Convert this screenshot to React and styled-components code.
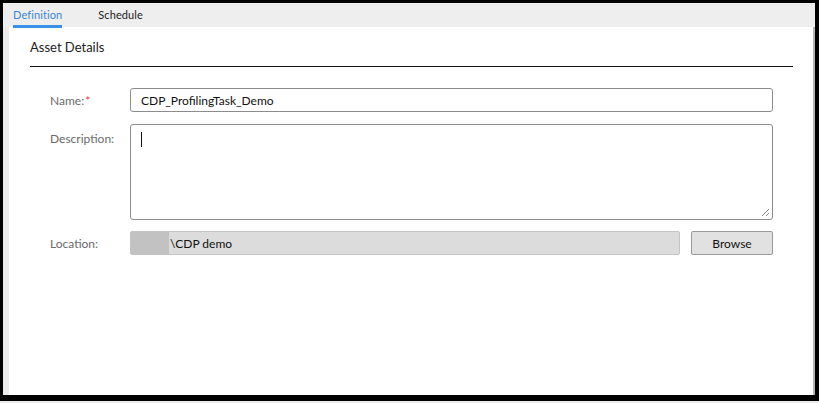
import React from "react";
import styled, { createGlobalStyle } from "styled-components";

const GlobalStyle = createGlobalStyle`
  html, body {
    margin: 0;
    padding: 0;
    background: #ececec;
  }
  body {
    font-family: "Lato", "Liberation Sans", sans-serif;
    color: #222;
  }
`;

const Frame = styled.div`
  box-sizing: border-box;
  width: 819px;
  height: 401px;
  border-style: solid;
  border-color: #000;
  border-width: 3px 4px 6px 3px;
  background: #fff;
  display: flex;
  flex-direction: column;
`;

const TabBar = styled.div`
  height: 24px;
  background: #eeeeee;
  display: flex;
  align-items: stretch;
  padding-left: 10px;
  gap: 36px;
  flex-shrink: 0;
`;

const Tab = styled.div`
  box-sizing: border-box;
  display: flex;
  align-items: center;
  padding-top: 1px;
  font-size: 11px;
  letter-spacing: 0.1px;
  color: ${p => (p.active ? "#3a87d8" : "#222")};
  border-bottom: 3px solid ${p => (p.active ? "#3a8fe6" : "transparent")};
  height: 25px;
`;

const Body = styled.div`
  flex: 1;
  display: flex;
`;

const SideStrip = styled.div`
  width: 6px;
  background: #ebebeb;
`;

const Panel = styled.div`
  flex: 1;
  padding: 12px 20px 0 21px;
  border-right: 2px solid #b5b5b5;
`;

const Heading = styled.div`
  font-size: 13px;
  height: 16px;
  line-height: 16px;
  padding-bottom: 11px;
  border-bottom: 1.5px solid #111;
`;

const Form = styled.div`
  padding: 21px 20px 0 20px;
  display: grid;
  grid-template-columns: 80px 1fr;
  row-gap: 12px;
`;

const Label = styled.div`
  font-size: 12px;
  color: #6a6a6a;
  padding-top: ${p => p.top || 5}px;
`;

const Req = styled.span`
  color: #e0393e;
  margin-left: 1px;
`;

const TextInput = styled.div`
  box-sizing: border-box;
  height: 24px;
  border: 1px solid #8c8c8c;
  border-radius: 3px;
  padding: 0 10px;
  display: flex;
  align-items: center;
  font-size: 12px;
  color: #111;
`;

const TextArea = styled.div`
  position: relative;
  box-sizing: border-box;
  height: 96px;
  border: 1px solid #8c8c8c;
  border-radius: 3px;
  padding: 7px 10px;
`;

const Caret = styled.div`
  width: 1px;
  height: 15px;
  background: #111;
`;

const Grip = styled.svg`
  position: absolute;
  right: 2px;
  bottom: 2px;
`;

const LocationRow = styled.div`
  display: flex;
  gap: 11px;
  margin-top: -1px;
`;

const LocationField = styled.div`
  box-sizing: border-box;
  flex: 1;
  height: 24px;
  background: #dcdcdc;
  border: 1px solid #c4c4c4;
  border-radius: 2px;
  display: flex;
  align-items: center;
  font-size: 12px;
  color: #111;
  overflow: hidden;
`;

const Redacted = styled.span`
  width: 38px;
  height: 100%;
  background: #c2c2c2;
  margin-right: 1px;
`;

const Button = styled.button`
  box-sizing: border-box;
  width: 82px;
  height: 24px;
  background: #e1e1e1;
  border: 1px solid #9a9a9a;
  border-radius: 2px;
  font-family: inherit;
  font-size: 12px;
  color: #111;
  padding: 0;
`;

const App = () => (
  <>
    <GlobalStyle />
    <Frame>
      <TabBar>
        <Tab active>Definition</Tab>
        <Tab>Schedule</Tab>
      </TabBar>
      <Body>
        <SideStrip />
        <Panel>
          <Heading>Asset Details</Heading>
          <Form>
            <Label>
              Name:<Req>*</Req>
            </Label>
            <TextInput>CDP_ProfilingTask_Demo</TextInput>
            <Label top={7}>Description:</Label>
            <TextArea>
              <Caret />
              <Grip width="10" height="10" viewBox="0 0 10 10">
                <path d="M9 2 L2 9 M9 6 L6 9" stroke="#888" strokeWidth="1" />
              </Grip>
            </TextArea>
            <Label top={4}>Location:</Label>
            <LocationRow>
              <LocationField>
                <Redacted />
                \CDP demo
              </LocationField>
              <Button>Browse</Button>
            </LocationRow>
          </Form>
        </Panel>
      </Body>
    </Frame>
  </>
);

export default App;
